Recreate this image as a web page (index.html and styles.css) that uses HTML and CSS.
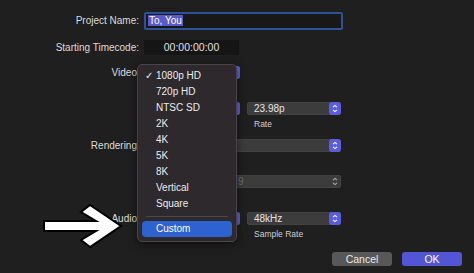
FILE: index.html
```html
<!DOCTYPE html>
<html lang="en">
<head>
    <meta charset="UTF-8">
    <title>Project Settings</title>
    <link rel="stylesheet" href="styles.css">
</head>
<body>
    <div class="dialog">
        <div class="row r-name">
            <label>Project Name:</label>
            <div class="field focus"><span class="sel">To, You</span></div>
        </div>
        <div class="row r-tc">
            <label>Starting Timecode:</label>
            <div class="field tc">00:00:00:00</div>
        </div>
        <div class="row r-video">
            <label>Video</label>
            <div class="pair">
                <div class="popup active"><span class="step"><svg viewBox="0 0 12 13"><path d="M4 5.2 6 3.4 8 5.2M4 7.8 6 9.6 8 7.8"/></svg></span></div>
            </div>
        </div>
        <div class="row r-format">
            <label></label>
            <div class="pair">
                <div class="col">
                    <div class="popup"><span class="step"><svg viewBox="0 0 12 13"><path d="M4 5.2 6 3.4 8 5.2M4 7.8 6 9.6 8 7.8"/></svg></span></div>
                    <span class="sub"></span>
                </div>
                <div class="col">
                    <div class="popup">23.98p<span class="step"><svg viewBox="0 0 12 13"><path d="M4 5.2 6 3.4 8 5.2M4 7.8 6 9.6 8 7.8"/></svg></span></div>
                    <span class="sub">Rate</span>
                </div>
            </div>
        </div>
        <div class="row r-render">
            <label>Rendering</label>
            <div class="popup wide"><span class="step"><svg viewBox="0 0 12 13"><path d="M4 5.2 6 3.4 8 5.2M4 7.8 6 9.6 8 7.8"/></svg></span></div>
        </div>
        <div class="row r-color">
            <label></label>
            <div class="popup wide off"><span class="peek">9</span><span class="step"><svg viewBox="0 0 12 13"><path d="M4 5.2 6 3.4 8 5.2M4 7.8 6 9.6 8 7.8"/></svg></span></div>
        </div>
        <div class="row r-audio">
            <label>Audio</label>
            <div class="pair">
                <div class="col">
                    <div class="popup"><span class="step"><svg viewBox="0 0 12 13"><path d="M4 5.2 6 3.4 8 5.2M4 7.8 6 9.6 8 7.8"/></svg></span></div>
                    <span class="sub"></span>
                </div>
                <div class="col">
                    <div class="popup">48kHz<span class="step"><svg viewBox="0 0 12 13"><path d="M4 5.2 6 3.4 8 5.2M4 7.8 6 9.6 8 7.8"/></svg></span></div>
                    <span class="sub">Sample Rate</span>
                </div>
            </div>
        </div>
        <div class="buttons">
            <button class="btn">Cancel</button>
            <button class="btn ok">OK</button>
        </div>

        <ul class="menu">
            <li class="checked">1080p HD</li>
            <li>720p HD</li>
            <li>NTSC SD</li>
            <li>2K</li>
            <li>4K</li>
            <li>5K</li>
            <li>8K</li>
            <li>Vertical</li>
            <li>Square</li>
            <li class="sep"></li>
            <li class="hl">Custom</li>
        </ul>

        <svg class="arrow" viewBox="0 0 86 50" width="86" height="50">
            <polygon points="4,19 56,19 41,10 50,3 81,24 50,45 41,38 56,29 4,29"/>
        </svg>
    </div>
</body>
</html>
```

FILE: styles.css
```css
html, body {
    margin: 0;
    padding: 0;
    background: #1f1f1f;
}
body {
    font-family: "Liberation Sans", Arial, sans-serif;
    font-size: 10px;
    color: #dcdcdc;
    width: 474px;
    height: 273px;
    overflow: hidden;
}
.dialog {
    position: relative;
    padding-top: 12px;
}
.row {
    display: grid;
    grid-template-columns: 137px 1fr;
    column-gap: 7px;
    align-items: start;
}
.row label {
    text-align: right;
    white-space: nowrap;
}
.r-name, .r-tc {
    grid-template-columns: 139px 1fr;
    column-gap: 5px;
}
.r-name label { line-height: 18px; }
.r-tc { margin-top: 10px; }
.r-tc label { line-height: 15px; }
.r-video { margin-top: 11px; }
.r-format { margin-top: 23px; }
.r-render { margin-top: 9px; }
.r-color { margin-top: 23px; }
.r-audio { margin-top: 24px; }
.r-video label, .r-render label, .r-audio label { line-height: 13px; }

.field {
    box-sizing: border-box;
    background: #181818;
}
.field.focus {
    width: 199px;
    height: 18px;
    border: 2px solid #2b5395;
    border-radius: 2px;
    padding: 1px 2px;
    line-height: 12px;
}
.sel {
    background: #5a5acb;
    color: #fff;
    padding: 0 1px;
}
.field.tc {
    width: 95px;
    height: 15px;
    background: #151515;
    line-height: 15px;
    text-align: center;
    font-size: 10.5px;
    color: #e0e0e0;
}

.pair {
    display: flex;
    gap: 7px;
}
.col {
    display: flex;
    flex-direction: column;
}
.popup {
    box-sizing: border-box;
    display: flex;
    justify-content: space-between;
    align-items: center;
    width: 96px;
    height: 13px;
    padding-left: 7px;
    background: #3c3c3c;
    border-radius: 3px;
    box-shadow: inset 0 0 0 0.5px #4a4a4a;
    color: #e6e6e6;
    white-space: nowrap;
}
.step { margin-left: auto; }
.col + .col .popup { width: 94px; }
.popup.wide { width: 197px; }
.step {
    width: 12px;
    height: 13px;
    border-radius: 3px;
    background: #5b5de0;
}
.step svg {
    display: block;
    width: 12px;
    height: 13px;
    fill: none;
    stroke: #fff;
    stroke-width: 1.1;
}
.popup.off { color: #6e6e6e; }
.popup.off .step { background: transparent; }
.popup.off .step svg { stroke: #aaa; }
.peek {
    padding-left: 87px;
}
.sub {
    min-height: 11px;
    padding-left: 7px;
    margin-top: 4px;
    font-size: 8.5px;
    line-height: 11px;
    color: #cfcfcf;
}

.buttons {
    display: flex;
    justify-content: flex-end;
    gap: 10px;
    margin-top: 12px;
    padding-right: 12px;
}
.btn {
    width: 60px;
    height: 14px;
    padding: 0;
    border: none;
    border-radius: 3px;
    background: #585858;
    color: #e8e8e8;
    font-family: inherit;
    font-size: 10.5px;
    line-height: 14px;
}
.btn.ok {
    background: #5356d4;
    color: #fff;
}

.menu {
    position: absolute;
    left: 137px;
    top: 64px;
    width: 100px;
    height: 178px;
    box-sizing: border-box;
    margin: 0;
    padding: 3px 4px;
    list-style: none;
    background: #2d292c;
    border: 1px solid #4a4548;
    border-radius: 5px;
    box-shadow: 0 2px 8px rgba(0, 0, 0, 0.5);
}
.menu li {
    height: 16px;
    line-height: 16px;
    padding-left: 14px;
    color: #ececec;
    border-radius: 4px;
    position: relative;
}
.menu li.checked::before {
    content: "✓";
    position: absolute;
    left: 3px;
    font-family: "DejaVu Sans", sans-serif;
    font-size: 10px;
}
.menu li.sep {
    height: 1px;
    margin: 4px;
    background: #4d4749;
}
.menu li.hl {
    background: #2d62d0;
    color: #fff;
}

.arrow {
    position: absolute;
    left: 40px;
    top: 202px;
}
.arrow polygon {
    fill: #fff;
    stroke: #000;
    stroke-width: 2;
    stroke-linejoin: miter;
}
```
